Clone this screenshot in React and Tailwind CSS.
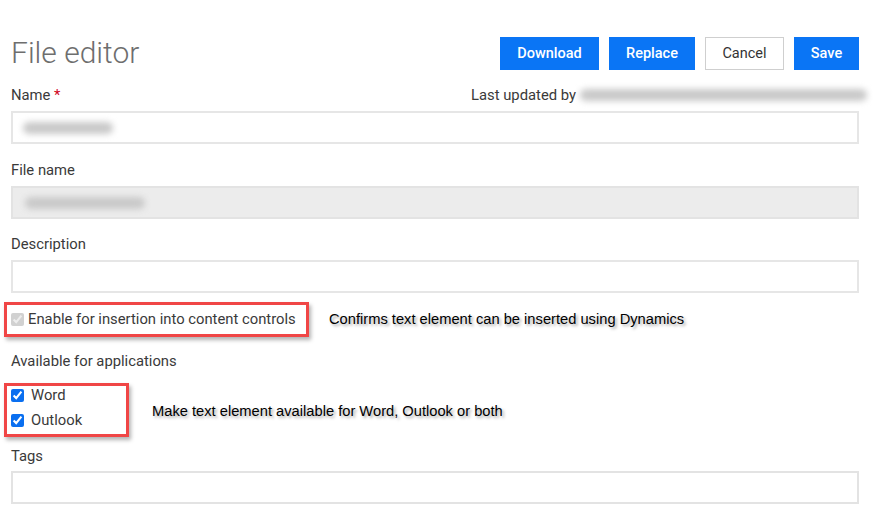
import React from 'react';

const Blur = ({ className }) => (
  <div className={`h-[12px] rounded-full bg-[#c9c9c9] blur-[3px] ${className}`} />
);

const Note = ({ children, className = '' }) => (
  <span
    className={`text-[14.7px] text-black [font-family:'Liberation_Sans',Arial,sans-serif] [text-shadow:2px_2px_3px_rgba(0,0,0,0.35)] ${className}`}
  >
    {children}
  </span>
);

export default function App() {
  return (
    <div className="w-[889px] h-[518px] overflow-hidden bg-white text-[#3a3a3a] [font-family:Roboto,'Noto_Sans',sans-serif]">
      <div className="w-[870px] pl-[11px] pr-[1px] pt-[37px]">
        {/* Header */}
        <div className="flex items-center justify-between w-[848px] h-[33px]">
          <h1 className="text-[30px] font-light text-[#6e6e6e] leading-none -mt-[2px]">File editor</h1>
          <div className="flex gap-[10px] text-[14.5px] font-medium">
            <button className="h-[33px] w-[99px] bg-[#0a75f5] text-white">Download</button>
            <button className="h-[33px] w-[86px] bg-[#0a75f5] text-white">Replace</button>
            <button className="h-[33px] w-[79px] bg-white border border-[#cfcfcf] text-[#333] font-normal">Cancel</button>
            <button className="h-[33px] w-[65px] bg-[#0a75f5] text-white">Save</button>
          </div>
        </div>

        {/* Name */}
        <div className="mt-[15px] flex items-center justify-between w-[848px] h-[20px] text-[14.8px]">
          <span>
            Name <span className="text-[#d0021b]">*</span>
          </span>
          <div className="flex items-center mr-[-8px]">
            <span>Last updated by</span>
            <Blur className="ml-[4px] w-[287px]" />
          </div>
        </div>
        <div className="mt-[6px] h-[33px] w-[848px] border-2 border-[#e6e6e6] flex items-center pl-[10px]">
          <Blur className="w-[90px]" />
        </div>

        {/* File name */}
        <div className="mt-[15px] h-[20px] text-[14.8px]">File name</div>
        <div className="mt-[7px] h-[33px] w-[848px] border-2 border-[#e3e3e3] bg-[#ececec] flex items-center pl-[12px]">
          <Blur className="w-[120px] bg-[#bdbdbd]" />
        </div>

        {/* Description */}
        <div className="mt-[14px] h-[20px] text-[14.8px]">Description</div>
        <div className="mt-[7px] h-[33px] w-[848px] border-2 border-[#e6e6e6]" />

        {/* Enable checkbox */}
        <div className="mt-[9px] flex items-center">
          <label className="-ml-[7px] w-[305px] h-[35px] border-[3px] border-[#f04646] shadow-[2px_3px_4px_rgba(0,0,0,0.3)] flex items-center pl-[4px] gap-[4px]">
            <input type="checkbox" checked disabled readOnly className="w-[13px] h-[13px] m-0" />
            <span className="text-[14.8px]">Enable for insertion into content controls</span>
          </label>
          <Note className="ml-[20px]">Confirms text element can be inserted using Dynamics</Note>
        </div>

        {/* Available for applications */}
        <div className="mt-[13px] h-[20px] text-[14.8px]">Available for applications</div>
        <div className="mt-[13px] flex items-center">
          <div className="-ml-[7px] w-[125px] h-[54px] border-[3px] border-[#f04646] shadow-[2px_3px_4px_rgba(0,0,0,0.3)] flex flex-col pl-[4px] gap-[5px]">
            <label className="flex items-center gap-[7px] h-[20px] -mt-[1px]">
              <input type="checkbox" checked readOnly className="w-[13px] h-[13px] m-0 accent-[#0a6ff0]" />
              <span className="text-[14.8px]">Word</span>
            </label>
            <label className="flex items-center gap-[7px] h-[20px]">
              <input type="checkbox" checked readOnly className="w-[13px] h-[13px] m-0 accent-[#0a6ff0]" />
              <span className="text-[14.8px]">Outlook</span>
            </label>
          </div>
          <Note className="ml-[23px] mt-[2px] text-[14.5px]">Make text element available for Word, Outlook or both</Note>
        </div>

        {/* Tags */}
        <div className="mt-[8px] h-[20px] text-[14.8px]">Tags</div>
        <div className="mt-[6px] h-[33px] w-[848px] border-2 border-[#e3e3e3]" />
      </div>
    </div>
  );
}
